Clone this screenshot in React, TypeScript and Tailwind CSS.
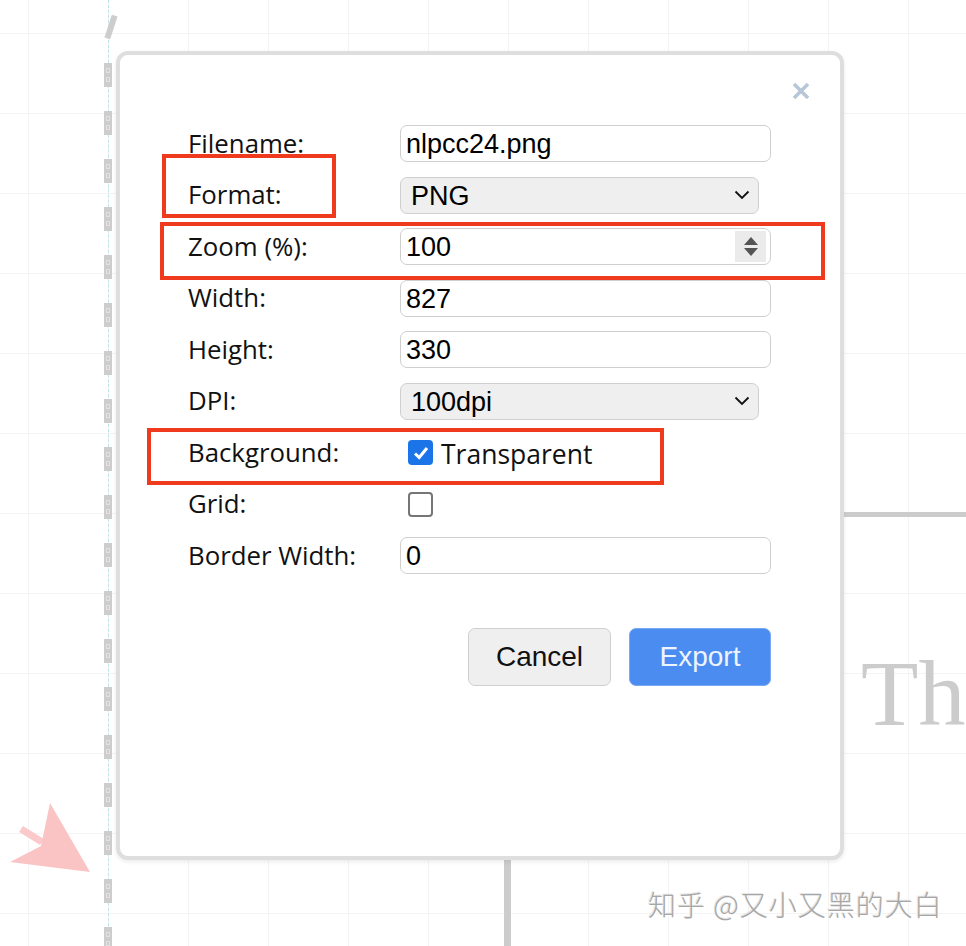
import React from 'react';

const labelFont = { fontFamily: '"Open Sans", "Noto Sans", sans-serif' };

const Chevron = () => (
    <svg width="16" height="10" viewBox="0 0 16 10" className="shrink-0">
        <path d="M1.5 1.5 L8 8 L14.5 1.5" fill="none" stroke="#111" strokeWidth="1.8" />
    </svg>
);

const TextBox: React.FC<{ value: string; children?: React.ReactNode }> = ({ value, children }) => (
    <div className="flex h-[37px] w-[371px] items-center rounded-[7px] border border-[#cfcfcf] bg-white pl-[5px] pr-[4px] font-['Liberation_Sans',Arial,sans-serif] text-[27px] leading-none text-black">
        <span className="flex-1 pt-[2px]">{value}</span>
        {children}
    </div>
);

const SelectBox: React.FC<{ value: string }> = ({ value }) => (
    <div className="flex h-[37px] w-[359px] items-center justify-between rounded-[7px] border border-[#cfcfcf] bg-[#efefef] pl-[10px] pr-[8px] font-['Liberation_Sans',Arial,sans-serif] text-[27px] leading-none text-black">
        <span className="pt-[2px]">{value}</span>
        <Chevron />
    </div>
);

const Row: React.FC<{ label: string; children: React.ReactNode }> = ({ label, children }) => (
    <div className="grid h-[51.5px] grid-cols-[212px_371px] items-center">
        <div className="text-[25.8px] leading-none text-[#111]" style={labelFont}>{label}</div>
        <div className="flex items-center">{children}</div>
    </div>
);

export default function App() {
    const blocks = Array.from({ length: 19 }, (_, i) => i);

    return (
        <div className="relative h-[946px] w-[966px] overflow-hidden bg-white bg-[linear-gradient(to_right,#f4f4f4_1px,transparent_1px),linear-gradient(to_bottom,#f4f4f4_1px,transparent_1px)] bg-[size:80px_80px] bg-[position:28px_33px]">
            {/* canvas: dashed guide line */}
            <div className="absolute left-[108px] top-0 h-full border-l border-dashed border-[#bfe4ec]" />
            {blocks.map(i => (
                <div
                    key={i}
                    className="absolute left-[104px] flex h-[24px] w-[8px] flex-col items-center justify-around bg-[#cdcdcd] py-[3px]"
                    style={{ top: 63 + i * 48 }}
                >
                    <div className="h-[5px] w-[4px] border border-[#e2e2e2]" />
                    <div className="h-[5px] w-[4px] border border-[#e2e2e2]" />
                </div>
            ))}
            <div className="absolute left-[108px] top-[15px] h-[24px] w-[6px] rotate-[18deg] bg-[#cdcdcd]" />

            {/* canvas: pink arrow */}
            <svg className="absolute left-0 top-[790px]" width="100" height="90" viewBox="0 790 100 90">
                <path d="M21 829 L42 842" stroke="#fbc9c9" strokeWidth="7" />
                <path d="M50 803 L90 872 L10 862 L41 846 Z" fill="#fbc4c4" />
            </svg>

            {/* canvas: lines and text behind the dialog */}
            <div className="absolute left-[840px] top-[512px] h-[5px] w-[130px] bg-[#cccccc]" />
            <div className="absolute left-[504px] top-[850px] h-[100px] w-[7px] bg-[#cccccc]" />
            <div className="absolute left-[861px] top-[646px] font-['Liberation_Serif',serif] text-[94px] leading-none text-[#cccccc]">Th</div>

            {/* watermark */}
            <div className="absolute left-[648px] top-[890px] font-['Noto_Sans_CJK_SC',sans-serif] text-[28px] font-light leading-none tracking-[1px] text-[#a6a6a6] [text-shadow:1px_1px_0_#ffffff,-1px_-1px_0_#e6e6e6]">
                知乎 @又小又黑的大白
            </div>

            {/* Export dialog */}
            <div className="absolute left-[116px] top-[51px] h-[809px] w-[728px] rounded-[12px] border-[4px] border-[#dedede] bg-white shadow-[0_2px_4px_rgba(0,0,0,0.08)]">
                <div className="absolute right-[30px] top-[27px]">
                    <svg width="18" height="18" viewBox="0 0 18 18">
                        <path d="M2 2 L16 16 M16 2 L2 16" stroke="#b7c6d8" strokeWidth="3.6" />
                    </svg>
                </div>

                <div className="pl-[68px] pt-[63px]">
                    <Row label="Filename:"><TextBox value="nlpcc24.png" /></Row>
                    <Row label="Format:"><SelectBox value="PNG" /></Row>
                    <Row label="Zoom (%):">
                        <TextBox value="100">
                            <div className="flex h-[31px] w-[31px] flex-col items-center justify-center gap-[3px] bg-[#ebebeb]">
                                <svg width="14" height="8" viewBox="0 0 14 8"><path d="M7 0 L14 8 L0 8 Z" fill="#555" /></svg>
                                <svg width="14" height="8" viewBox="0 0 14 8"><path d="M0 0 L14 0 L7 8 Z" fill="#555" /></svg>
                            </div>
                        </TextBox>
                    </Row>
                    <Row label="Width:"><TextBox value="827" /></Row>
                    <Row label="Height:"><TextBox value="330" /></Row>
                    <Row label="DPI:"><SelectBox value="100dpi" /></Row>
                    <Row label="Background:">
                        <div className="flex items-center gap-[8px] pl-[8px]">
                            <div className="flex h-[25px] w-[25px] items-center justify-center rounded-[4px] bg-[#1b74e8]">
                                <svg width="18" height="18" viewBox="0 0 18 18">
                                    <path d="M3 9.5 L7.2 13.5 L15 4" fill="none" stroke="#fff" strokeWidth="3" />
                                </svg>
                            </div>
                            <span className="pt-[3px] text-[26.5px] leading-none text-[#111]" style={labelFont}>Transparent</span>
                        </div>
                    </Row>
                    <Row label="Grid:">
                        <div className="ml-[8px] h-[25px] w-[25px] rounded-[4px] border-2 border-[#767676] bg-white" />
                    </Row>
                    <Row label="Border Width:"><TextBox value="0" /></Row>

                    <div className="mt-[46px] flex w-[583px] justify-end gap-[18px] font-['Liberation_Sans',Arial,sans-serif] text-[28px]">
                        <button className="h-[58px] w-[143px] rounded-[7px] border border-[#cfcfcf] bg-[#efefef] text-[#111]">Cancel</button>
                        <button className="h-[58px] w-[142px] rounded-[7px] border border-[#7aa9f3] bg-[#4a8cf0] text-[#eef4ff]">Export</button>
                    </div>
                </div>
            </div>

            {/* red annotation boxes */}
            <div className="absolute left-[162px] top-[154px] h-[64px] w-[174px] border-[4px] border-[#ef3a1d]" />
            <div className="absolute left-[160px] top-[222px] h-[58px] w-[665px] border-[4px] border-[#ef3a1d]" />
            <div className="absolute left-[147px] top-[428px] h-[57px] w-[517px] border-[4px] border-[#ef3a1d]" />
        </div>
    );
}
